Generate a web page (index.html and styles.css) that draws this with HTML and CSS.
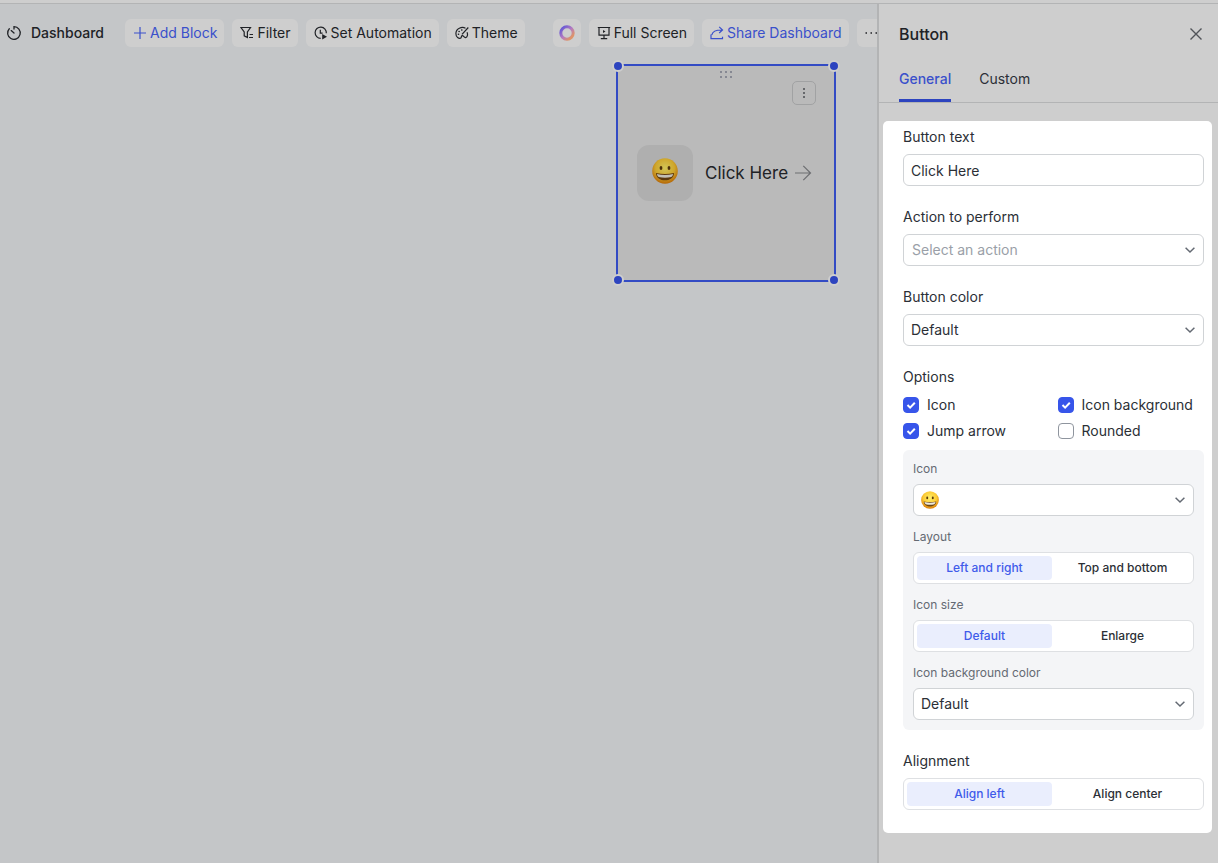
FILE: index.html
```html
<!DOCTYPE html>
<html lang="en">
<head>
<meta charset="utf-8">
<meta name="viewport" content="width=device-width, initial-scale=1">
<title>Dashboard</title>
<link rel="stylesheet" href="styles.css">
</head>
<body>
<svg class="defs" aria-hidden="true">
  <defs>
    <radialGradient id="face" cx="50%" cy="38%" r="62%">
      <stop offset="0" stop-color="#fff06a"/><stop offset=".6" stop-color="#fccb35"/><stop offset="1" stop-color="#dc7c08"/>
    </radialGradient>
    <linearGradient id="ring" x1="0" y1="0" x2="1" y2="1">
      <stop offset=".1" stop-color="#6a5bd4"/><stop offset=".5" stop-color="#b57bc0"/><stop offset=".85" stop-color="#de9468"/>
    </linearGradient>
    <symbol id="chevron" viewBox="0 0 12 12"><path d="M1.600 3.700 6 8l4.400-4.300" fill="none" stroke="currentColor" stroke-width="1.500"/></symbol>
    <symbol id="grin" viewBox="0 0 26 26">
      <circle cx="13" cy="13" r="12.800" fill="url(#face)"/>
      <ellipse cx="9" cy="10" rx="1.400" ry="2" fill="#5b3a0c"/>
      <ellipse cx="17" cy="10" rx="1.400" ry="2" fill="#5b3a0c"/>
      <path d="M4 15q9 2 18 0c0 9.800-18 9.800-18 0z" fill="#6f4410"/>
      <path d="M4.900 16q8.100 1.900 16.200 0-.4 2.300-1.800 3-6.300 1.500-12.600 0-1.400-.7-1.800-3z" fill="#ece9dc"/>
    </symbol>
  </defs>
</svg>
<div class="app">
  <div class="topline"></div>
  <div class="workspace">
    <main class="main">
      <header class="toolbar">
        <h1 class="page-title">
          <svg class="title-icon" width="16" height="16" viewBox="0 0 16 16" fill="none" stroke="currentColor" stroke-width="1.300"><path d="M8 4V1.700a6.300 6.300 0 1 1-4.700 2M8 8 5.200 5.600" stroke-linecap="round"/></svg>
          Dashboard
        </h1>
        <button class="tool tool-primary"><svg class="icon" viewBox="0 0 14 14"><path d="M7 1v12M1 7h12"/></svg>Add Block</button>
        <button class="tool"><svg class="icon" viewBox="0 0 14 14"><path d="M1 1.500h9.500L7.400 6v5.500L4.200 9.800V6zM9.600 8.500H13M9 11.500h4"/></svg>Filter</button>
        <button class="tool"><svg class="icon" viewBox="0 0 14 14"><path d="M12.300 7.200A5.600 5.600 0 1 0 6.700 12.300M6.300 3.700v3.500h2.300"/><path d="m8.200 7.900 4.800 2.900-4.800 2.700z" fill="currentColor" stroke="none"/></svg>Set Automation</button>
        <button class="tool"><svg class="icon" viewBox="0 0 14 14"><path d="M10.500 2.200C6.800.2 1 2.500.9 7.500c0 4 3 5.200 4.600 4.700 1.400-.5.300-2.200 1.700-2.600 1.300-.4 1.600 2.200 3.500 2 2-.4 2.200-3.500 1.300-5.300M13.300 1.500 7 8.300"/><path d="M3.400 8.300h.2M4 5.400h.2M6.700 3.900h.2" stroke-width="1.500" stroke-linecap="round"/></svg>Theme</button>
        <span class="spacer"></span>
        <button class="tool tool-square" aria-label="Assistant"><svg width="16" height="16" viewBox="0 0 16 16"><circle cx="8" cy="8" r="6.200" fill="none" stroke="url(#ring)" stroke-width="3"/></svg></button>
        <button class="tool"><svg class="icon" viewBox="0 0 14 14"><path d="M.8 1.500h12.400M2 1.500v7.700h10V1.500M7 9.200v3M3.800 12.700h6.400"/><path d="m6 3.900 2.500 1.500L6 6.900z" fill="currentColor" stroke="none"/></svg>Full Screen</button>
        <button class="tool tool-primary"><svg class="icon" viewBox="0 0 14 14"><path d="M1 8.500v4.200h11.500v-2M1.800 8.800C2.600 5.300 5.500 3.900 12 4M9.200.9 12.500 4 9.200 7"/></svg>Share Dashboard</button>
        <button class="tool" aria-label="More"><svg class="icon" viewBox="0 0 14 14"><path d="M.5 6.300H2v1.500H.5zM5.500 6.300H7v1.500H5.500zM10.500 6.300H12v1.500h-1.500z" fill="currentColor" stroke="none"/></svg></button>
      </header>
      <section class="canvas">
        <article class="tile">
          <svg class="grip" width="12" height="7" viewBox="0 0 12 7"><path d="M0 0h2v2H0zM5 0h2v2H5zM10 0h2v2h-2zM0 5h2v2H0zM5 5h2v2H5zM10 5h2v2h-2z" fill="#868892"/></svg>
          <button class="tile-menu" aria-label="Block menu"><svg width="2" height="10" viewBox="0 0 2 10"><path d="M0 0h2v2H0zM0 4h2v2H0zM0 8h2v2H0z" fill="#66686b"/></svg></button>
          <button class="tile-action">
            <span class="tile-icon"><svg class="tile-emoji" width="26" height="26"><use href="#grin"/></svg></span>
            <span class="tile-text">Click Here</span>
            <svg width="18" height="16" viewBox="0 0 18 16" fill="none" stroke="#6c6e71" stroke-width="1.200"><path d="M1 8h15.500M9.300.8 16.500 8l-7.200 7.200"/></svg>
          </button>
          <i class="handle handle-tl"></i><i class="handle handle-tr"></i><i class="handle handle-bl"></i><i class="handle handle-br"></i>
        </article>
      </section>
    </main>
    <aside class="panel">
      <header class="panel-head">
        <div class="panel-title-row">
          <h2 class="panel-title">Button</h2>
          <button class="close" aria-label="Close"><svg width="12" height="12" viewBox="0 0 12 12"><path d="m.5.500 11 11M11.500.500l-11 11" stroke="currentColor" stroke-width="1.400"/></svg></button>
        </div>
        <nav class="tabs">
          <button class="tab tab-active">General</button>
          <button class="tab">Custom</button>
        </nav>
      </header>
      <form class="card">
        <div class="field">
          <label class="label" for="text">Button text</label>
          <input class="control" id="text" type="text" value="Click Here">
        </div>
        <div class="field">
          <label class="label" for="action">Action to perform</label>
          <div class="select-wrap"><select class="control placeholder" id="action"><option>Select an action</option></select><svg class="chevron"><use href="#chevron"/></svg></div>
        </div>
        <div class="field">
          <label class="label" for="color">Button color</label>
          <div class="select-wrap"><select class="control" id="color"><option>Default</option></select><svg class="chevron"><use href="#chevron"/></svg></div>
        </div>
        <div class="field">
          <span class="label">Options</span>
          <div class="checks">
            <label class="check"><input class="box" type="checkbox" checked><svg class="tick" viewBox="0 0 16 16"><path d="m4.500 8 2.600 2.600 4.700-4.800"/></svg>Icon</label>
            <label class="check"><input class="box" type="checkbox" checked><svg class="tick" viewBox="0 0 16 16"><path d="m4.500 8 2.600 2.600 4.700-4.800"/></svg>Icon background</label>
            <label class="check"><input class="box" type="checkbox" checked><svg class="tick" viewBox="0 0 16 16"><path d="m4.500 8 2.600 2.600 4.700-4.800"/></svg>Jump arrow</label>
            <label class="check"><input class="box" type="checkbox"><svg class="tick" viewBox="0 0 16 16"><path d="m4.500 8 2.600 2.600 4.700-4.800"/></svg>Rounded</label>
          </div>
          <div class="group">
            <div class="field">
              <span class="sublabel" id="icon-label">Icon</span>
              <button class="control picker" type="button" aria-labelledby="icon-label"><svg width="18" height="18"><use href="#grin"/></svg><svg class="picker-chevron"><use href="#chevron"/></svg></button>
            </div>
            <div class="field">
              <span class="sublabel">Layout</span>
              <div class="segments">
                <label class="segment"><input class="segment-input" type="radio" name="layout" checked>Left and right</label>
                <label class="segment"><input class="segment-input" type="radio" name="layout">Top and bottom</label>
              </div>
            </div>
            <div class="field">
              <span class="sublabel">Icon size</span>
              <div class="segments">
                <label class="segment"><input class="segment-input" type="radio" name="size" checked>Default</label>
                <label class="segment"><input class="segment-input" type="radio" name="size">Enlarge</label>
              </div>
            </div>
            <div class="field">
              <label class="sublabel" for="icon-bg">Icon background color</label>
              <div class="select-wrap"><select class="control" id="icon-bg"><option>Default</option></select><svg class="chevron"><use href="#chevron"/></svg></div>
            </div>
          </div>
        </div>
        <div class="field">
          <span class="label">Alignment</span>
          <div class="segments">
            <label class="segment"><input class="segment-input" type="radio" name="align" checked>Align left</label>
            <label class="segment"><input class="segment-input" type="radio" name="align">Align center</label>
          </div>
        </div>
      </form>
    </aside>
  </div>
</div>
</body>
</html>
```
FILE: styles.css
```css
* { box-sizing: border-box; }

body {
  margin: 0;
  font: 14px/22px Inter, "Liberation Sans", sans-serif;
  color: #2b2f36;
}

button, input, select { font: inherit; color: inherit; margin: 0; }
button { border: 0; background: none; padding: 0; cursor: pointer; }
svg { flex: none; display: block; }
h1, h2 { margin: 0; }

.defs { position: absolute; width: 0; height: 0; }

.app { min-height: 100vh; display: flex; flex-direction: column; }
.topline { height: 4px; background: #cecece; border-bottom: 1px solid #b3b4b5; }
.workspace { flex: 1; display: flex; }

.main { flex: 1; min-width: 0; background: #c4c6c8; }

.toolbar {
  display: flex;
  align-items: center;
  gap: 8px;
  padding: 15px 0 0 6px;
  overflow: hidden;
}
.page-title {
  display: flex;
  flex: none;
  align-items: center;
  gap: 9px;
  margin-right: 13px;
  font-size: 14px;
  font-weight: 500;
  color: #202226;
}
.tool {
  display: flex;
  flex: none;
  align-items: center;
  gap: 3px;
  height: 28px;
  padding: 0 7px 0 8px;
  border-radius: 6px;
  background: #cecece;
  color: #202226;
}
.tool-primary { color: #3a50cb; }
.tool-square { width: 28px; padding: 0; justify-content: center; }
.icon { width: 14px; height: 14px; fill: none; stroke: currentColor; stroke-width: 1.2; }
.spacer { width: 12px; flex: none; }

.canvas { display: flex; justify-content: flex-end; padding: 17px 41px; }
.tile {
  position: relative;
  display: flex;
  align-items: center;
  width: 220px;
  height: 218px;
  padding: 0 19px;
  border: 2px solid #334bc4;
  background: #bababa;
}
.grip { position: absolute; top: 5px; left: 102px; }
.tile-menu {
  position: absolute;
  top: 15px;
  right: 18px;
  display: flex;
  align-items: center;
  justify-content: center;
  width: 24px;
  height: 24px;
  border: 1px solid #a1a2a3;
  border-radius: 5px;
}
.tile-action { display: flex; align-items: center; gap: 6px; color: #202226; }
.tile-icon {
  display: flex;
  justify-content: center;
  width: 56px;
  height: 56px;
  padding-top: 13px;
  margin-right: 6px;
  border-radius: 12px;
  background: #afafaf;
}
.tile-emoji { filter: brightness(0.82); }
.tile-text { font-size: 17px; line-height: 26px; white-space: nowrap; }
.handle {
  position: absolute;
  width: 12px;
  height: 12px;
  border: 2px solid #cecece;
  border-radius: 50%;
  background: #2d44bf;
}
.handle-tl { top: -6px; left: -6px; }
.handle-tr { top: -6px; right: -6px; }
.handle-bl { bottom: -6px; left: -6px; }
.handle-br { bottom: -6px; right: -6px; }

.panel { width: 341px; flex: none; border-left: 2px solid #b3b4b5; background: #cecece; }
.panel-head { padding: 18px 16px 0 20px; border-bottom: 1px solid #b3b4b5; }
.panel-title-row { display: flex; align-items: center; justify-content: space-between; height: 24px; }
.panel-title { font-size: 16px; font-weight: 500; line-height: 24px; color: #202226; }
.close { color: #515459; }
.tabs { display: flex; gap: 28px; padding-top: 18px; }
.tab { padding: 4px 0 9px; border-bottom: 3px solid transparent; }
.tab-active { font-weight: 500; color: #3a50cb; border-color: #2d44bf; }

.card {
  display: flex;
  flex-direction: column;
  gap: 20px;
  margin: 18px 6px 30px 4px;
  padding: 5px 8px 23px 20px;
  border-radius: 5px;
  background: #fff;
}
.field { display: flex; flex-direction: column; }
.label { margin-bottom: 6px; }
.sublabel { margin-bottom: 6px; font-size: 12px; line-height: 18px; color: #646a73; }
.control {
  width: 100%;
  height: 32px;
  padding: 0 7px;
  border: 1px solid #d0d3d6;
  border-radius: 6px;
  background: #fff;
  appearance: none;
}
.placeholder { padding-left: 8px; color: #9a9fa8; }
.select-wrap { display: grid; align-items: center; }
.select-wrap > * { grid-area: 1 / 1; }
.chevron { width: 12px; height: 12px; margin-right: 8px; justify-self: end; color: #646a73; pointer-events: none; }
.picker { display: flex; align-items: center; justify-content: space-between; }
.picker-chevron { width: 12px; height: 12px; color: #646a73; }

.checks { display: grid; grid-template-columns: 1fr 1fr; gap: 4px 8px; }
.check { display: grid; grid-template-columns: 16px 1fr; column-gap: 8px; align-items: center; white-space: nowrap; }
.box {
  grid-area: 1 / 1;
  width: 16px;
  height: 16px;
  border: 1px solid #8f959e;
  border-radius: 4px;
  background: #fff;
  appearance: none;
}
.box:checked { border-color: #3755ea; background: #3755ea; }
.tick { grid-area: 1 / 1; width: 16px; height: 16px; fill: none; stroke: none; stroke-width: 2; pointer-events: none; }
.box:checked + .tick { stroke: #fff; }

.group {
  display: flex;
  flex-direction: column;
  gap: 12px;
  margin-top: 8px;
  padding: 10px;
  border-radius: 6px;
  background: #f4f5f7;
}
.segments {
  display: grid;
  grid-template-columns: 1fr 1fr;
  gap: 3px;
  height: 32px;
  padding: 3px;
  border: 1px solid #dee0e3;
  border-radius: 6px;
  background: #fff;
}
.segment {
  display: flex;
  align-items: center;
  justify-content: center;
  border-radius: 4px;
  font-size: 12px;
  font-weight: 500;
  cursor: pointer;
}
.segment:has(:checked) { background: #eaeefd; color: #3f5bea; }
.segment-input { position: absolute; opacity: 0; pointer-events: none; }
```
